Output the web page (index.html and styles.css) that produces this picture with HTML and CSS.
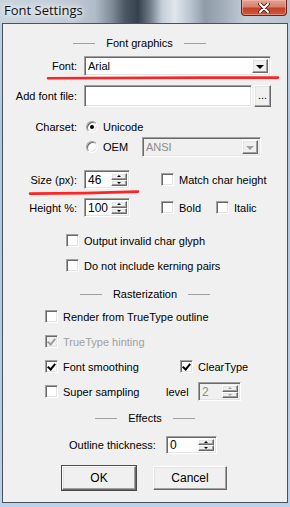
FILE: index.html
```html
<!DOCTYPE html>
<html lang="en">
<head>
    <meta charset="UTF-8">
    <title>Font Settings</title>
    <link rel="stylesheet" href="styles.css">
</head>
<body>
    <div class="window">
        <!-- Title bar -->
        <div class="titlebar">
            <span class="title">Font Settings</span>
            <div class="close-btn">
                <svg width="12" height="10" viewBox="0 0 12 10">
                    <path d="M2 1 L10 9 M10 1 L2 9" stroke="#3b1a16" stroke-width="3.6" stroke-linecap="round"/>
                    <path d="M2 1 L10 9 M10 1 L2 9" stroke="#fff" stroke-width="2" stroke-linecap="round"/>
                </svg>
            </div>
        </div>

        <div class="client">
            <!-- Font graphics -->
            <div class="group-title first">
                <span class="rule"></span><span>Font graphics</span><span class="rule"></span>
            </div>

            <div class="row row-font">
                <span class="lbl">Font:</span>
                <div class="combo sunken font-combo">
                    <span class="combo-text">Arial</span>
                    <span class="drop raised"><span class="arrow-down"></span></span>
                </div>
            </div>

            <div class="row row-addfile">
                <span class="lbl">Add font file:</span>
                <div class="edit sunken file-edit"></div>
                <div class="btn raised dots-btn">...</div>
            </div>

            <div class="row row-charset">
                <span class="lbl">Charset:</span>
                <span class="radio checked"></span>
                <span class="radio-text">Unicode</span>
            </div>

            <div class="row row-oem">
                <span class="lbl"></span>
                <span class="radio"></span>
                <span class="radio-text oem-text">OEM</span>
                <div class="combo sunken disabled ansi-combo">
                    <span class="combo-text">ANSI</span>
                    <span class="drop raised"><span class="arrow-down"></span></span>
                </div>
            </div>

            <div class="row row-size">
                <span class="lbl">Size (px):</span>
                <div class="spin sunken">
                    <span class="spin-val">46</span>
                    <span class="spin-btns"><span class="raised"><i class="arrow-up"></i></span><span class="raised"><i class="arrow-dn"></i></span></span>
                </div>
                <label class="chk-item match-item"><span class="check"></span>Match char height</label>
            </div>

            <div class="row row-height">
                <span class="lbl">Height %:</span>
                <div class="spin sunken">
                    <span class="spin-val">100</span>
                    <span class="spin-btns"><span class="raised"><i class="arrow-up"></i></span><span class="raised"><i class="arrow-dn"></i></span></span>
                </div>
                <label class="chk-item match-item bold-item"><span class="check"></span>Bold</label>
                <label class="chk-item"><span class="check"></span>Italic</label>
            </div>

            <div class="row row-invalid">
                <label class="chk-item"><span class="check"></span>Output invalid char glyph</label>
            </div>

            <div class="row row-kerning">
                <label class="chk-item"><span class="check"></span>Do not include kerning pairs</label>
            </div>

            <!-- Rasterization -->
            <div class="group-title raster-title">
                <span class="rule"></span><span>Rasterization</span><span class="rule"></span>
            </div>

            <div class="row row-raster row-render">
                <label class="chk-item"><span class="check"></span>Render from TrueType outline</label>
            </div>

            <div class="row row-raster row-step">
                <label class="chk-item disabled"><span class="check checked"></span>TrueType hinting</label>
            </div>

            <div class="row row-raster row-step">
                <label class="chk-item smooth-item"><span class="check checked"></span>Font smoothing</label>
                <label class="chk-item"><span class="check checked"></span>ClearType</label>
            </div>

            <div class="row row-raster row-super">
                <label class="chk-item super-item"><span class="check"></span>Super sampling</label>
                <span class="level-lbl">level</span>
                <div class="spin sunken disabled level-spin">
                    <span class="spin-val">2</span>
                    <span class="spin-btns"><span class="raised"><i class="arrow-up"></i></span><span class="raised"><i class="arrow-dn"></i></span></span>
                </div>
            </div>

            <!-- Effects -->
            <div class="group-title effects-title">
                <span class="rule"></span><span>Effects</span><span class="rule"></span>
            </div>

            <div class="row row-outline">
                <span class="outline-lbl">Outline thickness:</span>
                <div class="spin sunken outline-spin">
                    <span class="spin-val">0</span>
                    <span class="spin-btns"><span class="raised"><i class="arrow-up"></i></span><span class="raised"><i class="arrow-dn"></i></span></span>
                </div>
            </div>

            <div class="row row-buttons">
                <div class="btn raised push default">OK</div>
                <div class="btn raised push">Cancel</div>
            </div>
        </div>

        <!-- red hand-drawn marks over the screenshot -->
        <svg class="marks" width="290" height="507" viewBox="0 0 290 507">
            <path d="M48 78.2 C 110 78.6, 200 77.2, 278 77.6" stroke="#ff2424" stroke-width="2.6" fill="none" stroke-linecap="round"/>
            <path d="M30 193.6 Q 86 193.4, 138 191.6" stroke="#ff2424" stroke-width="2.6" fill="none" stroke-linecap="round"/>
        </svg>
    </div>
</body>
</html>
```

FILE: styles.css
```css
/* General */
body {
    margin: 0;
    background-color: #b7cde4;
    font-family: "Liberation Sans", Arial, sans-serif;
    font-size: 11px;
    color: #000;
}

.window {
    position: relative;
    width: 290px;
    height: 507px;
    box-sizing: border-box;
    padding: 0 2px 4px 2px;
    display: flex;
    flex-direction: column;
    background: linear-gradient(to bottom, #c3d3e3 0, #aec7e1 120px, #b3cbe4 400px, #bcd2ea 100%);
}

/* Title bar (glass) */
.titlebar {
    position: relative;
    height: 23px;
    margin: 0 -2px;
    padding-left: 4px;
    display: flex;
    align-items: center;
    background:
        linear-gradient(90deg,
            #c9d3de 0px, #c3cdd9 60px, #b1bcc8 95px, #7f8b98 112px,
            #4b5763 125px, #35414d 138px, #6f7b87 150px, #c4ced8 162px,
            #e0e6ec 175px, #bcc6d1 190px, #8f9ba7 205px, #a5b0bc 225px,
            #c2ccd7 245px, #b8c4d0 290px);
}

.title {
    font-family: "Open Sans", "Liberation Sans", sans-serif;
    font-size: 13px;
    color: #101010;
    margin-top: -3px;
    text-shadow: 0 0 5px #fff, 0 0 8px rgba(255, 255, 255, 0.9), 0 0 12px rgba(255, 255, 255, 0.8);
}

.close-btn {
    position: absolute;
    top: 0;
    left: 241px;
    width: 46px;
    height: 16px;
    box-sizing: border-box;
    border: 1px solid #6e2219;
    border-top: none;
    border-radius: 0 0 4px 4px;
    background: linear-gradient(to bottom, #e2a293 0, #d8806c 45%, #c4412b 55%, #cc5a3c 100%);
    display: flex;
    justify-content: center;
    align-items: center;
    box-shadow: inset 0 0 0 1px rgba(255, 200, 190, 0.45);
}

/* Client area */
.client {
    flex: 1;
    border: 1px solid #46535f;
    background-color: #f0f0f0;
    display: flex;
    flex-direction: column;
}

.row {
    display: flex;
    align-items: center;
}

.lbl {
    width: 74px;
    margin-right: 7px;
    text-align: right;
    white-space: nowrap;
}

/* 3D borders */
.sunken {
    box-sizing: border-box;
    border: 1px solid;
    border-color: #a0a0a0 #fff #fff #a0a0a0;
    box-shadow: inset 1px 1px 0 #696969, inset -1px -1px 0 #e3e3e3;
    background-color: #fff;
}

.raised {
    box-sizing: border-box;
    border: 1px solid;
    border-color: #fff #696969 #696969 #fff;
    box-shadow: inset -1px -1px 0 #a0a0a0, inset 1px 1px 0 #e3e3e3;
    background-color: #f0f0f0;
}

/* Group titles */
.group-title {
    display: flex;
    justify-content: center;
    align-items: center;
    gap: 11px;
    height: 14px;
    white-space: nowrap;
}

.group-title .rule {
    width: 22px;
    height: 1px;
    background-color: #a0a0a0;
}

.group-title.first {
    margin-top: 12px;
    padding-right: 11px;
}

.raster-title {
    margin-top: 15px;
}

.effects-title {
    margin-top: 10px;
}

/* Combo boxes and edits */
.combo {
    display: flex;
    align-items: stretch;
    padding: 2px;
}

.combo-text {
    flex: 1;
    padding-left: 1px;
    display: flex;
    align-items: center;
}

.drop {
    width: 16px;
    display: flex;
    justify-content: center;
    align-items: center;
}

.arrow-down {
    width: 0;
    height: 0;
    border-left: 4px solid transparent;
    border-right: 4px solid transparent;
    border-top: 4px solid #000;
    margin-top: 1px;
}

.disabled .arrow-down {
    border-top-color: #a0a0a0;
}

.combo.disabled,
.spin.disabled {
    background-color: #f0f0f0;
    color: #8a8a8a;
}

.row-font {
    margin-top: 6px;
}

.font-combo {
    width: 187px;
    height: 20px;
}

.row-addfile {
    margin-top: 9px;
}

.file-edit {
    width: 168px;
    height: 22px;
}

.dots-btn {
    width: 17px;
    height: 22px;
    margin-left: 2px;
    display: flex;
    justify-content: center;
    align-items: flex-end;
    padding-bottom: 5px;
    line-height: 1;
}

/* Radios */
.radio {
    width: 12px;
    height: 12px;
    box-sizing: border-box;
    border-radius: 50%;
    border: 1px solid;
    border-color: #a0a0a0 #fff #fff #a0a0a0;
    box-shadow: inset 1px 1px 0 #696969, inset -1px -1px 0 #e3e3e3;
    background-color: #fff;
    margin-left: 2px;
    margin-right: 5px;
    display: flex;
    justify-content: center;
    align-items: center;
}

.radio.checked::after {
    content: "";
    width: 4px;
    height: 4px;
    border-radius: 50%;
    background-color: #000;
}

.row-charset {
    margin-top: 13px;
    height: 14px;
}

.row-oem {
    margin-top: 3px;
}

.oem-text {
    width: 39px;
}

.ansi-combo {
    width: 119px;
    height: 20px;
}

/* Spin boxes */
.spin {
    display: flex;
    width: 46px;
    height: 19px;
    padding: 2px;
}

.spin-val {
    flex: 1;
    padding-left: 1px;
    display: flex;
    align-items: center;
    font-size: 12px;
}

.spin-btns {
    width: 16px;
    display: flex;
    flex-direction: column;
}

.spin-btns span {
    flex: 1;
    display: flex;
    justify-content: center;
    align-items: center;
}

.arrow-up,
.arrow-dn {
    width: 0;
    height: 0;
    border-left: 2px solid transparent;
    border-right: 2px solid transparent;
}

.arrow-up {
    border-bottom: 2px solid #000;
}

.arrow-dn {
    border-top: 2px solid #000;
}

.disabled .arrow-up {
    border-bottom-color: #a0a0a0;
}

.disabled .arrow-dn {
    border-top-color: #a0a0a0;
}

.row-size {
    margin-top: 13px;
}

.row-height {
    margin-top: 9px;
}

/* Check boxes */
.chk-item {
    display: flex;
    align-items: center;
    gap: 5px;
    white-space: nowrap;
}

.check {
    width: 13px;
    height: 13px;
    flex: none;
    box-sizing: border-box;
    border: 1px solid;
    border-color: #a0a0a0 #fff #fff #a0a0a0;
    box-shadow: inset 1px 1px 0 #696969, inset -1px -1px 0 #e3e3e3;
    background-color: #fff;
    position: relative;
}

.check.checked::after {
    content: "";
    position: absolute;
    left: 3px;
    top: 1px;
    width: 3px;
    height: 6px;
    border-right: 2px solid #000;
    border-bottom: 2px solid #000;
    transform: rotate(40deg);
}

.chk-item.disabled {
    color: #a0a0a0;
}

.chk-item.disabled .check {
    background-color: #f0f0f0;
}

.chk-item.disabled .check.checked::after {
    border-color: #a0a0a0;
}

.match-item {
    margin-left: 31px;
}

.bold-item {
    width: 55px;
}

.row-invalid {
    margin-top: 17px;
    padding-left: 63px;
}

.row-kerning {
    margin-top: 12px;
    padding-left: 63px;
}

.row-raster {
    padding-left: 42px;
}

.row-render {
    margin-top: 9px;
}

.row-step {
    margin-top: 12px;
}

.smooth-item {
    width: 135px;
}

.row-super {
    margin-top: 9px;
}

.super-item {
    width: 121px;
}

.level-lbl {
    width: 32px;
}

.level-spin {
    width: 43px;
}

/* Outline + buttons */
.row-outline {
    margin-top: 11px;
    padding-left: 66px;
}

.outline-lbl {
    width: 97px;
}

.outline-spin {
    width: 51px;
    height: 18px;
}

.row-buttons {
    margin-top: 12px;
    padding-left: 59px;
    gap: 17px;
}

.push {
    width: 74px;
    height: 24px;
    display: flex;
    justify-content: center;
    align-items: center;
    font-size: 12px;
}

.push.default {
    border-color: #fff #696969 #696969 #fff;
    outline: 1px solid #4a4a4a;
    outline-offset: 0;
}

.marks {
    position: absolute;
    left: 0;
    top: 0;
    pointer-events: none;
}
```
